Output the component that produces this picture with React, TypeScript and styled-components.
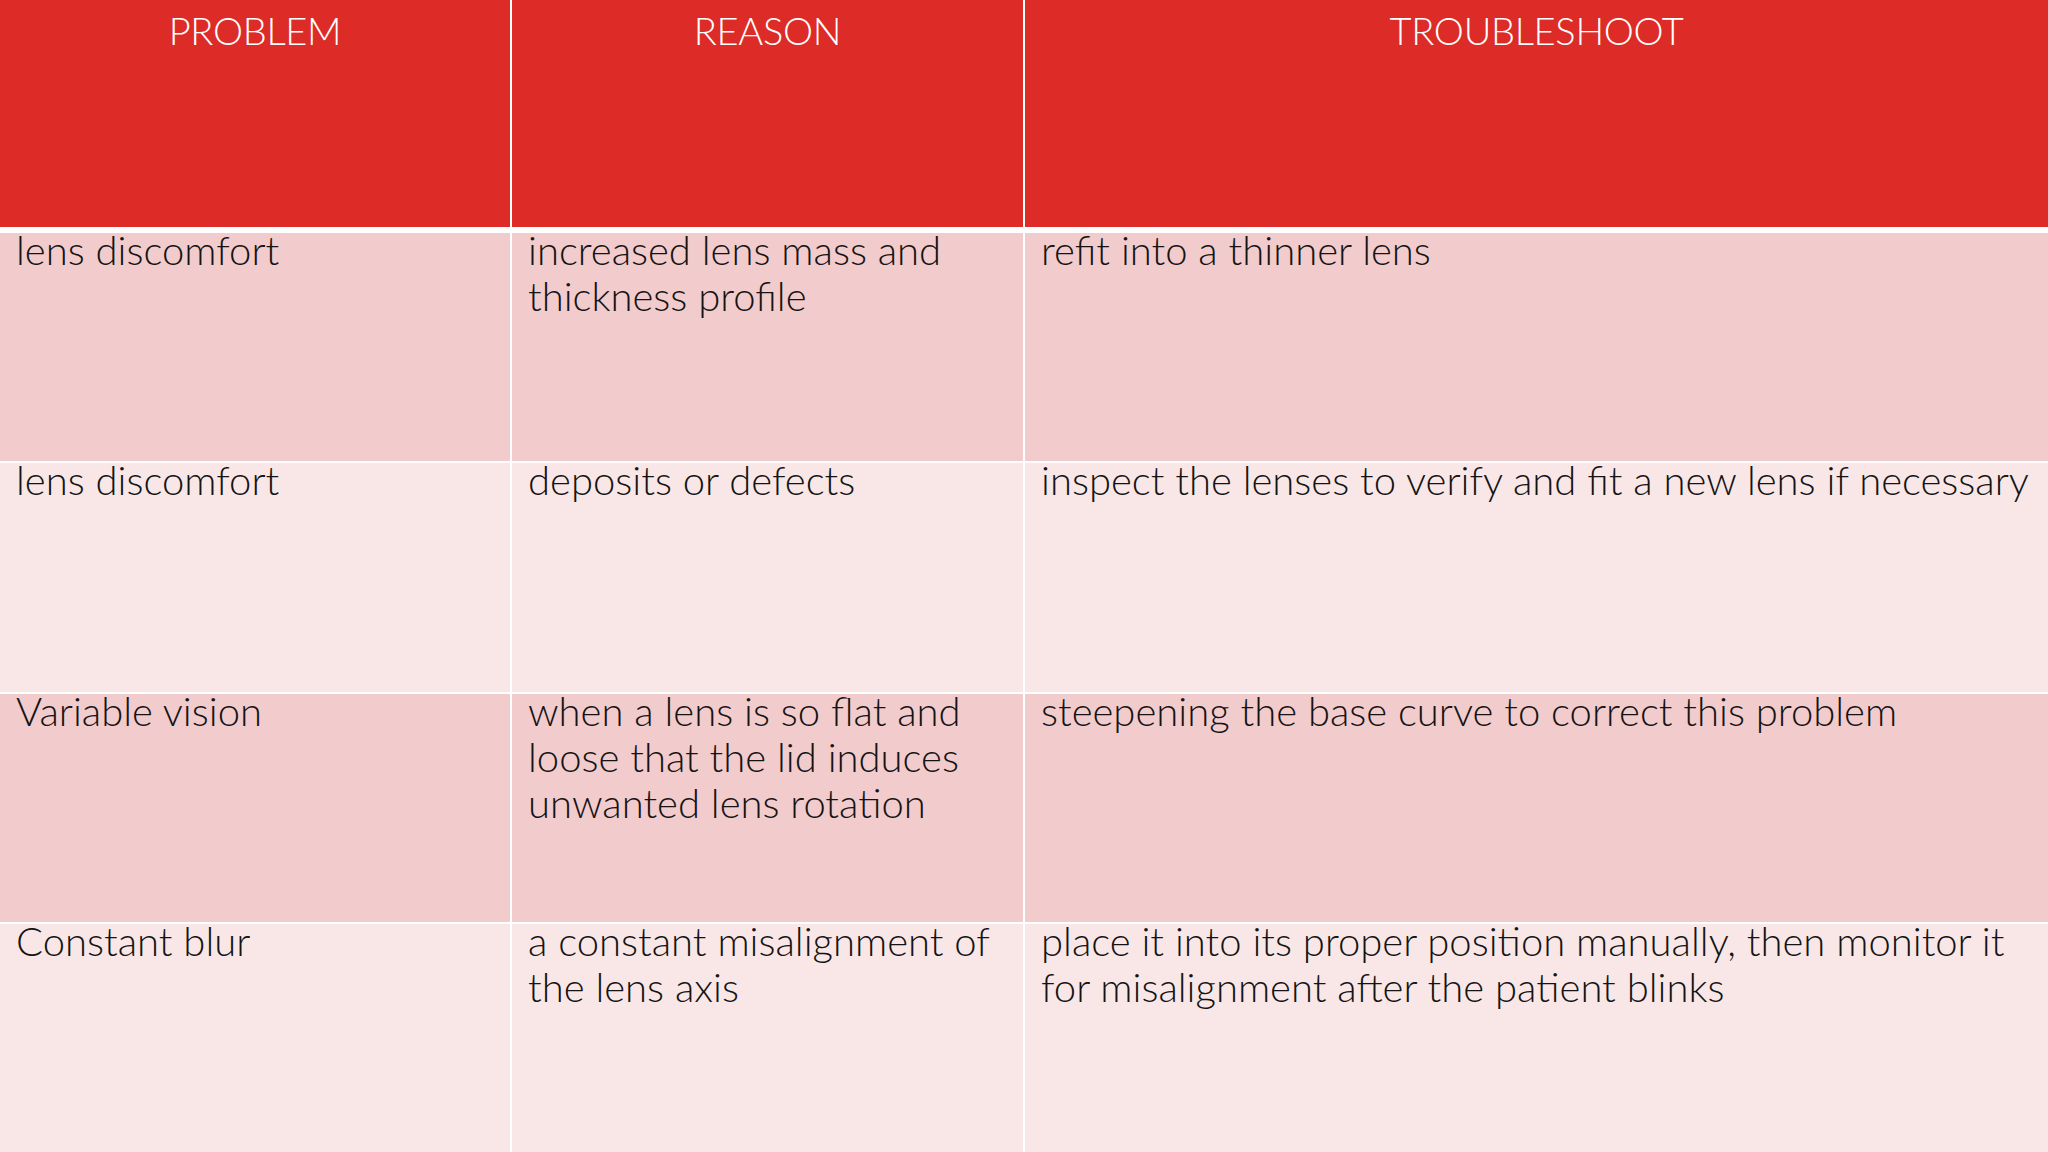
import React from "react";
import styled, { createGlobalStyle } from "styled-components";

const Global = createGlobalStyle`
  html, body { margin: 0; padding: 0; background: #ffffff; }
  body { font-family: "Lato", "Open Sans", sans-serif; }
  * { box-sizing: border-box; }
`;

const Page = styled.div`
  width: 2048px;
  height: 1152px;
  display: flex;
  flex-direction: column;
  gap: 2px;
  background: #ffffff;
  overflow: hidden;
`;

const Row = styled.div<{ $header?: boolean }>`
  display: grid;
  grid-template-columns: 510px 511px 1fr;
  column-gap: 2px;
  height: ${(p) => (p.$header ? "227px" : "228px")};
  margin-bottom: ${(p) => (p.$header ? "4px" : "0")};
  flex: ${(p) => (p.$header ? "none" : "1 1 auto")};
`;

const HeaderCell = styled.div`
  background: #dd2b27;
  color: #ffffff;
  font-family: "Lato", "Open Sans", sans-serif;
  font-weight: 300;
  font-size: 38px;
  line-height: 50px;
  letter-spacing: -0.3px;
  text-align: center;
  padding-top: 5px;
`;

const Cell = styled.div<{ $tone: "odd" | "even" }>`
  background: ${(p) => (p.$tone === "odd" ? "#f2cbcc" : "#f9e7e7")};
  color: #141414;
  font-family: "Lato", "Open Sans", sans-serif;
  font-weight: 300;
  font-size: 40px;
  line-height: 46px;
  padding: 0 10px 0 16px;
`;

const Text = styled.div`
  margin-top: -6px;
`;

const Line = styled.span`
  display: block;
  white-space: nowrap;
`;

const rows: string[][][] = [
  [["lens discomfort"], ["increased lens mass and", "thickness profile"], ["refit into a thinner lens"]],
  [["lens discomfort"], ["deposits or defects"], ["inspect the lenses to verify and fit a new lens if necessary"]],
  [
    ["Variable vision"],
    ["when a lens is so flat and", "loose that the lid induces", "unwanted lens rotation"],
    ["steepening the base curve to correct this problem"],
  ],
  [
    ["Constant blur"],
    ["a constant misalignment of", "the lens axis"],
    ["place it into its proper position manually, then monitor it", "for misalignment after the patient blinks"],
  ],
];

export default function App() {
  return (
    <>
      <Global />
      <Page>
        <Row $header>
          <HeaderCell>PROBLEM</HeaderCell>
          <HeaderCell>REASON</HeaderCell>
          <HeaderCell>TROUBLESHOOT</HeaderCell>
        </Row>
        {rows.map((r, i) => (
          <Row key={i}>
            {r.map((lines, j) => (
              <Cell key={j} $tone={i % 2 === 0 ? "odd" : "even"}>
                <Text>
                  {lines.map((l, k) => (
                    <Line key={k}>{l}</Line>
                  ))}
                </Text>
              </Cell>
            ))}
          </Row>
        ))}
      </Page>
    </>
  );
}
